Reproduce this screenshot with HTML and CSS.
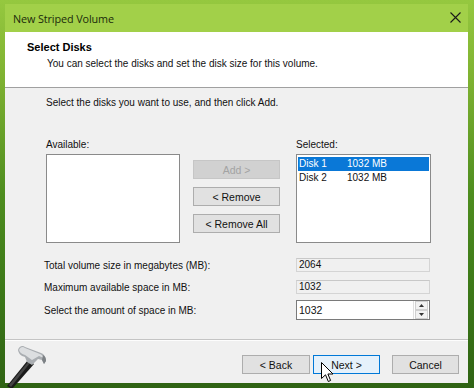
FILE: index.html
```html
<!DOCTYPE html>
<html>
<head>
<meta charset="utf-8">
<link rel="stylesheet" href="styles.css">
</head>
<body>
<div class="window">
  <div class="titlebar">
    <span class="title">New Striped Volume</span>
    <svg class="close" width="11" height="11" viewBox="0 0 11 11"><path d="M0.5 0.5 L10.5 10.5 M10.5 0.5 L0.5 10.5" stroke="#1a1a1a" stroke-width="1.1" fill="none"/></svg>
  </div>
  <div class="header">
    <div class="h-title">Select Disks</div>
    <div class="h-sub">You can select the disks and set the disk size for this volume.</div>
  </div>
  <div class="content">
    <div class="intro">Select the disks you want to use, and then click Add.</div>
    <div class="picker">
      <div class="col">
        <div class="lbl">Available:</div>
        <div class="listbox avail"></div>
      </div>
      <div class="btns">
        <div class="btn disabled">Add &gt;</div>
        <div class="btn">&lt; Remove</div>
        <div class="btn">&lt; Remove All</div>
      </div>
      <div class="col">
        <div class="lbl">Selected:</div>
        <div class="listbox sel">
          <div class="row active"><span class="c1">Disk 1</span><span>1032 MB</span></div>
          <div class="row"><span class="c1">Disk 2</span><span>1032 MB</span></div>
        </div>
      </div>
    </div>
    <div class="fields">
      <div class="frow r1"><span class="flbl">Total volume size in megabytes (MB):</span><div class="field ro">2064</div></div>
      <div class="frow r2"><span class="flbl">Maximum available space in MB:</span><div class="field ro">1032</div></div>
      <div class="frow r3"><span class="flbl">Select the amount of space in MB:</span>
        <div class="field spin"><span class="val">1032</span>
          <div class="spinbtns">
            <div class="sb"><svg width="5" height="3" viewBox="0 0 5 3"><path d="M0 3 L2.5 0 L5 3Z" fill="#333"/></svg></div>
            <div class="sb"><svg width="5" height="3" viewBox="0 0 5 3"><path d="M0 0 L2.5 3 L5 0Z" fill="#333"/></svg></div>
          </div>
        </div>
      </div>
    </div>
  </div>
  <div class="footer">
    <div class="btn fb">&lt; Back</div>
    <div class="btn fb next">Next &gt;</div>
    <div class="btn fb cancel">Cancel</div>
  </div>
</div>
<svg class="hammer" width="48" height="48" viewBox="0 0 48 48">
  <path d="M4 45 L25 19 L31 23 L9 48 Z" fill="#1a1a1a"/>
  <path d="M6 44 L25 21 L27 22 L8 46 Z" fill="#444"/>
  <path d="M15 9 C16 5 20 4 22 6 L38 12 C41 13 43 16 43 20 L41 23 L39 19 L35 18 L29 24 L24 21 L22 16 C19 15 16 14 15 9 Z" fill="#a9adb1"/>
  <path d="M16 9 C17 6 20 5 22 7 L37 13 C39 14 40 15 41 17 L36 15 L29 19 L22 14 C19 13 17 12 16 9 Z" fill="#dcdee0"/>
  <path d="M39 19 L41 23 L43 20 C43 17 42 15 40 14 Z" fill="#7d8185"/>
</svg>
<svg class="cursor" width="13" height="21" viewBox="0 0 13 21">
  <path d="M0.5 0.5 L0.5 16.5 L4.5 12.8 L7.3 19.5 L9.6 18.5 L6.9 12 L12 12 Z" fill="#fff" stroke="#000" stroke-width="1" stroke-linejoin="round"/>
</svg>
</body>
</html>
```
FILE: styles.css
```css
html, body {
  margin: 0;
  padding: 0;
}
body {
  width: 474px;
  height: 388px;
  overflow: hidden;
  position: relative;
  background: linear-gradient(180deg, #95c83f 0%, #7fb232 20%, #4e8d1f 50%, #3c7818 75%, #2f6314 100%);
  font-family: "Liberation Sans", Arial, sans-serif;
  font-size: 10px;
  color: #111;
}
.window {
  position: relative;
  margin: 4px 0 0 5px;
  width: 463px;
  height: 379px;
  display: flex;
  flex-direction: column;
  background: #f0f0f0;
}
.titlebar {
  height: 28px;
  background: #a2d049;
  display: flex;
  align-items: center;
  justify-content: space-between;
  padding: 0 7px 0 8px;
}
.title {
  font-family: "Open Sans", "Liberation Sans", sans-serif;
  font-size: 10.8px;
  color: #1b2a0b;
  letter-spacing: -0.1px;
}
.close {
  margin-top: -1px;
}
.header {
  height: 56px;
  background: #fff;
  border-bottom: 1px solid #a0a0a0;
  box-sizing: border-box;
  padding: 9px 0 0 22px;
}
.h-title {
  font-weight: bold;
  font-size: 11px;
  line-height: 13px;
  color: #000;
}
.h-sub {
  padding-left: 20px;
  margin-top: 3px;
  line-height: 13px;
}
.content {
  height: 252px;
  box-sizing: border-box;
  padding: 8px 0 0 41px;
  border-bottom: 1px solid #c4c4c4;
}
.intro {
  line-height: 14px;
}
.picker {
  display: flex;
  margin-top: 28px;
}
.lbl {
  line-height: 14px;
  height: 14px;
  margin-bottom: 2px;
}
.listbox {
  background: #fff;
  border: 1px solid #8a8a8a;
  box-sizing: border-box;
  height: 89px;
}
.avail {
  width: 134px;
}
.sel {
  width: 135px;
  padding: 2px 1px;
}
.row {
  display: flex;
  height: 14px;
  line-height: 14px;
  padding-left: 1px;
}
.row.active {
  background: #0a78d7;
  color: #fff;
}
.c1 {
  width: 48px;
}
.btns {
  display: flex;
  flex-direction: column;
  gap: 8px;
  margin: 22px 16px 0 13px;
}
.btn {
  box-sizing: border-box;
  width: 87px;
  height: 19px;
  border: 1px solid #adadad;
  background: #e1e1e1;
  display: flex;
  align-items: center;
  justify-content: center;
  font-size: 10.5px;
}
.btn.disabled {
  background: #d1d1d1;
  border-color: #c6c6c6;
  color: #a3a3a3;
}
.fields {
  margin: 15px 0 0 -2px;
  display: flex;
  flex-direction: column;
}
.frow {
  display: flex;
  align-items: center;
}
.flbl {
  width: 252px;
}
.field {
  box-sizing: border-box;
  width: 134px;
  line-height: 12px;
  padding-left: 2px;
}
.field.ro {
  height: 14px;
  background: #f0f0f0;
  border: 1px solid #d4d4d4;
  border-top-color: #c8c8c8;
}
.r2 {
  margin-top: 8px;
}
.r3 {
  margin-top: 6px;
}
.field.spin {
  height: 20px;
  background: #fff;
  border: 1px solid #7a7a7a;
  display: flex;
  align-items: center;
  justify-content: space-between;
  padding-right: 0;
}
.val {
  font-size: 10.5px;
}
.spinbtns {
  width: 15px;
  height: 18px;
  display: flex;
  flex-direction: column;
  border-left: 1px solid #e0e0e0;
}
.sb {
  flex: 1;
  display: flex;
  align-items: center;
  justify-content: center;
  background: #f2f2f2;
  border: 1px solid #d0d0d0;
  margin: 0 1px;
}
.footer {
  flex: 1;
  border-top: 1px solid #fdfdfd;
  display: flex;
  padding: 14px 9px 0 0;
  justify-content: flex-end;
  align-items: flex-start;
}
.fb {
  width: 68px;
}
.next {
  width: 67px;
  margin-left: 3px;
  background: #e5f1fb;
  border-color: #0078d7;
}
.cancel {
  width: 67px;
  margin-left: 12px;
}
.hammer {
  position: absolute;
  left: 3px;
  top: 341px;
}
.cursor {
  position: absolute;
  left: 321px;
  top: 362px;
}
```
